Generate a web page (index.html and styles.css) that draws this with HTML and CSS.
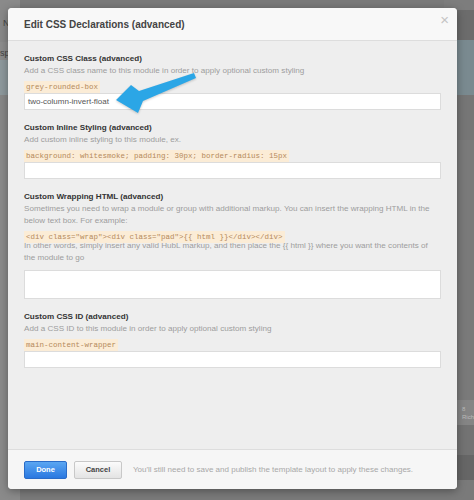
FILE: index.html
```html
<!DOCTYPE html>
<html>
<head>
<meta charset="utf-8">
<link rel="stylesheet" href="styles.css">
</head>
<body>
<div class="backdrop">
  <div class="bg-left">
    <span class="bg-n">N</span>
    <span class="bg-sp">sp</span>
  </div>
  <div class="bg-right">
    <span class="bg-num">8<br>Rich</span>
  </div>
</div>

<div class="modal">
  <div class="modal-header">
    <h3 class="modal-title">Edit CSS Declarations (advanced)</h3>
    <span class="close">×</span>
  </div>
  <div class="modal-body">
    <div class="field">
      <div class="label">Custom CSS Class (advanced)</div>
      <div class="desc">Add a CSS class name to this module in order to apply optional custom styling</div>
      <div class="code-line"><code>grey-rounded-box</code></div>
      <div class="input">two-column-invert-float</div>
    </div>
    <div class="field">
      <div class="label">Custom Inline Styling (advanced)</div>
      <div class="desc">Add custom inline styling to this module, ex.</div>
      <div class="code-line"><code>background: whitesmoke; padding: 30px; border-radius: 15px</code></div>
      <div class="input"></div>
    </div>
    <div class="field">
      <div class="label">Custom Wrapping HTML (advanced)</div>
      <div class="desc">Sometimes you need to wrap a module or group with additional markup. You can insert the wrapping HTML in the below text box. For example:</div>
      <div class="code-line"><code>&lt;div class="wrap"&gt;&lt;div class="pad"&gt;{{ html }}&lt;/div&gt;&lt;/div&gt;</code></div>
      <div class="desc">In other words, simply insert any valid HubL markup, and then place the {{ html }} where you want the contents of the module to go</div>
      <div class="textarea"></div>
    </div>
    <div class="field">
      <div class="label">Custom CSS ID (advanced)</div>
      <div class="desc">Add a CSS ID to this module in order to apply optional custom styling</div>
      <div class="code-line"><code>main-content-wrapper</code></div>
      <div class="input"></div>
    </div>
  </div>
  <div class="modal-footer">
    <button class="btn btn-primary">Done</button>
    <button class="btn btn-default">Cancel</button>
    <span class="footer-note">You'll still need to save and publish the template layout to apply these changes.</span>
  </div>
  <svg class="arrow" width="100" height="45" viewBox="0 0 100 45">
    <polygon points="8,30 23,15 31,21 86,3 88,8 35,31 30,43" fill="#2ba6e6"/>
  </svg>
</div>
</body>
</html>
```

FILE: styles.css
```css
* { box-sizing: border-box; }
html, body { margin: 0; padding: 0; }
body {
  width: 474px;
  height: 500px;
  position: relative;
  overflow: hidden;
  font-family: "Liberation Sans", Arial, sans-serif;
  background: #7a7a7a;
}
.backdrop {
  display: flex;
  justify-content: space-between;
  height: 500px;
}
.bg-left {
  width: 20px;
  background: linear-gradient(#8a8a8a 0 10px, #888 10px 42px, #8c8c8c 42px 60px, #8d989c 60px 95px, #878787 95px 130px, #8a8a8a 130px 500px);
  position: relative;
  font-size: 9px;
  color: #444;
}
.bg-n { position: absolute; left: 3px; top: 18px; }
.bg-sp { position: absolute; left: 0; top: 48px; }
.bg-right {
  width: 30px;
  background: linear-gradient(#7d7d7d 0 10px, #6c6c6c 10px 40px, #7a8a90 40px 95px, #767676 95px 140px, #7a7a7a 140px 400px, #858585 400px 425px, #737373 425px 455px, #666 455px 480px, #7a7a7a 480px 500px);
  position: relative;
  font-size: 6px;
  color: #bbb;
}
.bg-num { position: absolute; left: 18px; top: 405px; line-height: 8px; }

.modal {
  position: absolute;
  left: 8px;
  top: 8px;
  width: 449px;
  height: 481px;
  display: flex;
  flex-direction: column;
  background: #eeeeee;
  border-radius: 4px;
  box-shadow: 0 2px 8px rgba(0,0,0,0.35);
  overflow: hidden;
}
.modal-header {
  height: 33px;
  background: #f8f8f8;
  border-bottom: 1px solid #dddddd;
  padding: 0 16px;
  display: flex;
  align-items: center;
  position: relative;
}
.modal-title {
  margin: 0;
  font-size: 10px;
  font-weight: bold;
  color: #444;
}
.close {
  position: absolute;
  right: 8px;
  top: 3px;
  font-size: 15px;
  color: #c4c4c4;
  line-height: 18px;
}
.modal-body {
  flex: 1;
  padding: 11px 16px 0;
}
.field { margin-bottom: 11px; }
.label {
  font-size: 8.1px;
  font-weight: bold;
  color: #333;
  line-height: 13px;
}
.desc {
  font-size: 8.1px;
  color: #9d9d9d;
  line-height: 12px;
}
.code-line {
  line-height: 13px;
  height: 13px;
}
code {
  font-family: "Liberation Mono", "Courier New", monospace;
  font-size: 7.5px;
  color: #b58a5c;
  background: #fbecd6;
  padding: 2px 2px;
}
.input {
  margin-top: 3px;
  height: 17px;
  background: #fff;
  border: 1px solid #dcdcdc;
  font-size: 8px;
  color: #555;
  padding: 0 3px;
  line-height: 15px;
}
.textarea {
  margin-top: 6px;
  height: 29px;
  background: #fff;
  border: 1px solid #dcdcdc;
}
.modal-footer {
  height: 40px;
  background: #f6f6f6;
  border-top: 1px solid #dddddd;
  padding: 0 16px;
  display: flex;
  align-items: center;
}
.btn {
  height: 18px;
  font-family: "Liberation Sans", Arial, sans-serif;
  font-size: 7.5px;
  font-weight: bold;
  border-radius: 2px;
  padding: 0;
  margin-right: 7px;
}
.btn-primary {
  width: 43px;
  color: #fff;
  background: linear-gradient(#5aa6f2, #2a78e0);
  border: 1px solid #2a6cc8;
}
.btn-default {
  width: 48px;
  color: #444;
  background: linear-gradient(#fbfbfb, #e3e3e3);
  border: 1px solid #c8c8c8;
}
.footer-note {
  margin-left: 4px;
  font-size: 8px;
  color: #a8a8a8;
}
.arrow {
  position: absolute;
  left: 100px;
  top: 62px;
  pointer-events: none;
  filter: drop-shadow(0 1px 1px rgba(0,0,0,0.2));
}
```
